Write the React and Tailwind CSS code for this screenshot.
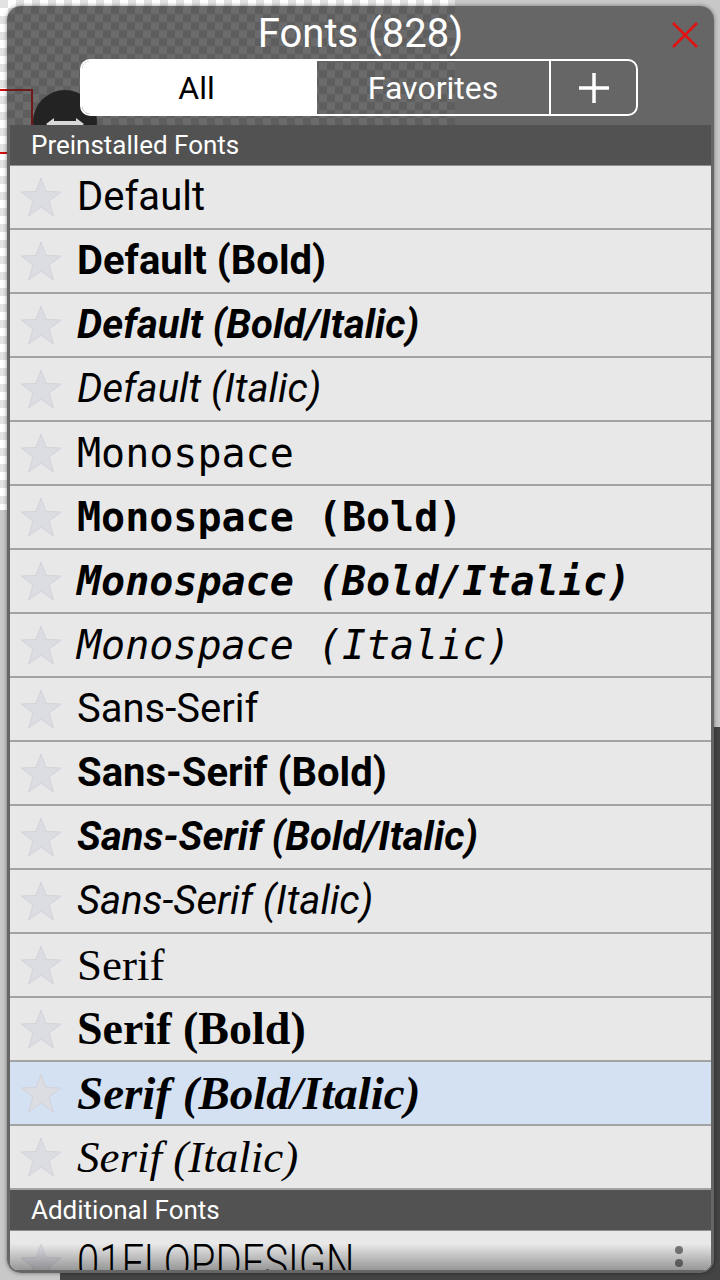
import React from "react";

const FONTS = [
  { name: "Default", cls: "font-[family-name:Roboto,sans-serif] text-[40px]" },
  { name: "Default (Bold)", cls: "font-[family-name:Roboto,sans-serif] text-[40px] font-bold" },
  { name: "Default (Bold/Italic)", cls: "font-[family-name:Roboto,sans-serif] text-[40px] font-bold italic" },
  { name: "Default (Italic)", cls: "font-[family-name:Roboto,sans-serif] text-[40px] italic" },
  { name: "Monospace", cls: "font-[family-name:'DejaVu_Sans_Mono',monospace] text-[40px]" },
  { name: "Monospace (Bold)", cls: "font-[family-name:'DejaVu_Sans_Mono',monospace] text-[40px] font-bold" },
  { name: "Monospace (Bold/Italic)", cls: "font-[family-name:'DejaVu_Sans_Mono',monospace] text-[40px] font-bold italic" },
  { name: "Monospace (Italic)", cls: "font-[family-name:'DejaVu_Sans_Mono',monospace] text-[40px] italic" },
  { name: "Sans-Serif", cls: "font-[family-name:Roboto,sans-serif] text-[40px]" },
  { name: "Sans-Serif (Bold)", cls: "font-[family-name:Roboto,sans-serif] text-[40px] font-bold" },
  { name: "Sans-Serif (Bold/Italic)", cls: "font-[family-name:Roboto,sans-serif] text-[40px] font-bold italic" },
  { name: "Sans-Serif (Italic)", cls: "font-[family-name:Roboto,sans-serif] text-[40px] italic" },
  { name: "Serif", cls: "font-[family-name:'Liberation_Serif',serif] text-[45px]" },
  { name: "Serif (Bold)", cls: "font-[family-name:'Liberation_Serif',serif] text-[46px] font-bold" },
  { name: "Serif (Bold/Italic)", cls: "font-[family-name:'Liberation_Serif',serif] text-[47px] font-bold italic", selected: true },
  { name: "Serif (Italic)", cls: "font-[family-name:'Liberation_Serif',serif] text-[45px] italic" },
];

const Star = () => (
  <svg width="42" height="40" viewBox="0 0 42 40" className="shrink-0">
    <polygon
      points="21,1 26,14.5 41,15 29,24 33.5,39 21,30 8.5,39 13,24 1,15 16,14.5"
      fill="#dcdce3"
      stroke="#d2d2da"
      strokeWidth="1"
    />
  </svg>
);

const SectionHeader = ({ title }) => (
  <div className="h-[41px] shrink-0 bg-[#525252] border-b border-[#8e8e8e] flex items-center pl-[21px] text-white text-[26px] font-[family-name:Roboto,sans-serif]">
    {title}
  </div>
);

const FontRow = ({ font }) => (
  <div
    className={
      "h-[64px] shrink-0 border-b-2 border-[#a3a3a3] flex items-center gap-[15px] pl-[10px] text-black " +
      (font.selected ? "bg-[#d4e1f3]" : "bg-[#e8e8e8]")
    }
  >
    <Star />
    <span className={"leading-none whitespace-nowrap " + font.cls}>{font.name}</span>
  </div>
);

export default function App() {
  return (
    <div className="relative w-[720px] h-[1280px] overflow-hidden bg-[#c8c8c8] pt-[6px] pl-[7px] font-[family-name:Roboto,sans-serif]">
      {/* canvas behind the dialog */}
      <div className="absolute left-0 top-0 w-[455px] h-[510px] bg-[image:repeating-conic-gradient(#ffffff_0_25%,#e2e2e2_0_50%)] bg-size-[16px_16px]">
        <div className="absolute left-0 top-[89px] w-[33px] h-[2px] bg-[#d01010]" />
        <div className="absolute left-0 top-[152px] w-[12px] h-[2px] bg-[#d01010]" />
      </div>
      <div className="absolute left-[60px] top-[727px] w-[700px] h-[600px] rounded-[24px] bg-[#444]" />

      {/* dialog */}
      <div className="relative w-[707px] h-[1267px] rounded-[14px] px-[3px] pb-[3px] flex flex-col overflow-hidden shadow-[0_0_4px_rgba(0,0,0,0.45)] bg-[image:linear-gradient(to_bottom,transparent_119px,#666_119px),linear-gradient(to_right,transparent_448px,#666_448px),repeating-conic-gradient(#5e5e5e_0_25%,#6b6b6b_0_50%)] bg-size-[100%_100%,100%_100%,16px_16px]">
        {/* things on the canvas seen through the dialog */}
        <div className="absolute left-0 top-[83px] w-[26px] h-[2px] bg-[#6e1a1a]" />
        <div className="absolute left-[24px] top-[83px] w-[2px] h-[40px] bg-[#6e1a1a]" />
        <div className="absolute left-[26px] top-[84px] w-[64px] h-[64px] rounded-full bg-[#232323] flex justify-center pt-[28px]">
          <svg width="42" height="12" viewBox="0 0 42 12">
            <polygon points="2,6 10,0 10,3 32,3 32,0 40,6 32,12 32,9 10,9 10,12" fill="#d8d8d8" />
          </svg>
        </div>

        <div className="relative h-[53px] shrink-0 flex items-center justify-center pt-[3px]">
          <span className="text-white text-[40px] leading-none">Fonts (828)</span>
          <svg className="absolute right-[13px] top-[16px]" width="26" height="26" viewBox="0 0 26 26">
            <path d="M1 1 L25 25 M25 1 L1 25" stroke="#e01212" strokeWidth="2.6" />
          </svg>
        </div>

        <div className="relative h-[57px] shrink-0 ml-[70px] w-[558px] flex rounded-[10px] border-2 border-white overflow-hidden">
          <div className="w-[235px] bg-white text-black text-[32px] flex items-center justify-center pr-[6px]">All</div>
          <div className="w-[234px] border-r-2 border-white text-white text-[32px] flex items-center justify-center">
            Favorites
          </div>
          <div className="flex-1 flex items-center justify-center">
            <svg width="32" height="32" viewBox="0 0 32 32">
              <path d="M16 1 V31 M1 16 H31" stroke="#ffffff" strokeWidth="3.5" />
            </svg>
          </div>
        </div>

        <div className="h-[9px] shrink-0" />

        <div className="relative flex-1 flex flex-col overflow-hidden rounded-b-[8px] bg-[#e8e8e8]">
          <SectionHeader title="Preinstalled Fonts" />
          {FONTS.map((f) => (
            <FontRow key={f.name} font={f} />
          ))}
          <SectionHeader title="Additional Fonts" />
          <div className="h-[64px] shrink-0 flex items-center gap-[15px] pl-[10px] pr-[28px] bg-[#e8e8e8]">
            <Star />
            <div className="flex-1">
              <span className="inline-block origin-left scale-x-[0.8] text-black text-[50px] leading-none font-light whitespace-nowrap">
                01FLOPDESIGN
              </span>
            </div>
            <div className="flex flex-col gap-[5px]">
              <div className="w-[8px] h-[8px] rounded-full bg-[#7a7a7a]" />
              <div className="w-[8px] h-[8px] rounded-full bg-[#7a7a7a]" />
              <div className="w-[8px] h-[8px] rounded-full bg-[#7a7a7a]" />
            </div>
          </div>
          <div className="absolute left-0 right-0 bottom-0 h-[26px] bg-linear-to-b from-transparent to-black/35" />
        </div>
      </div>
    </div>
  );
}
